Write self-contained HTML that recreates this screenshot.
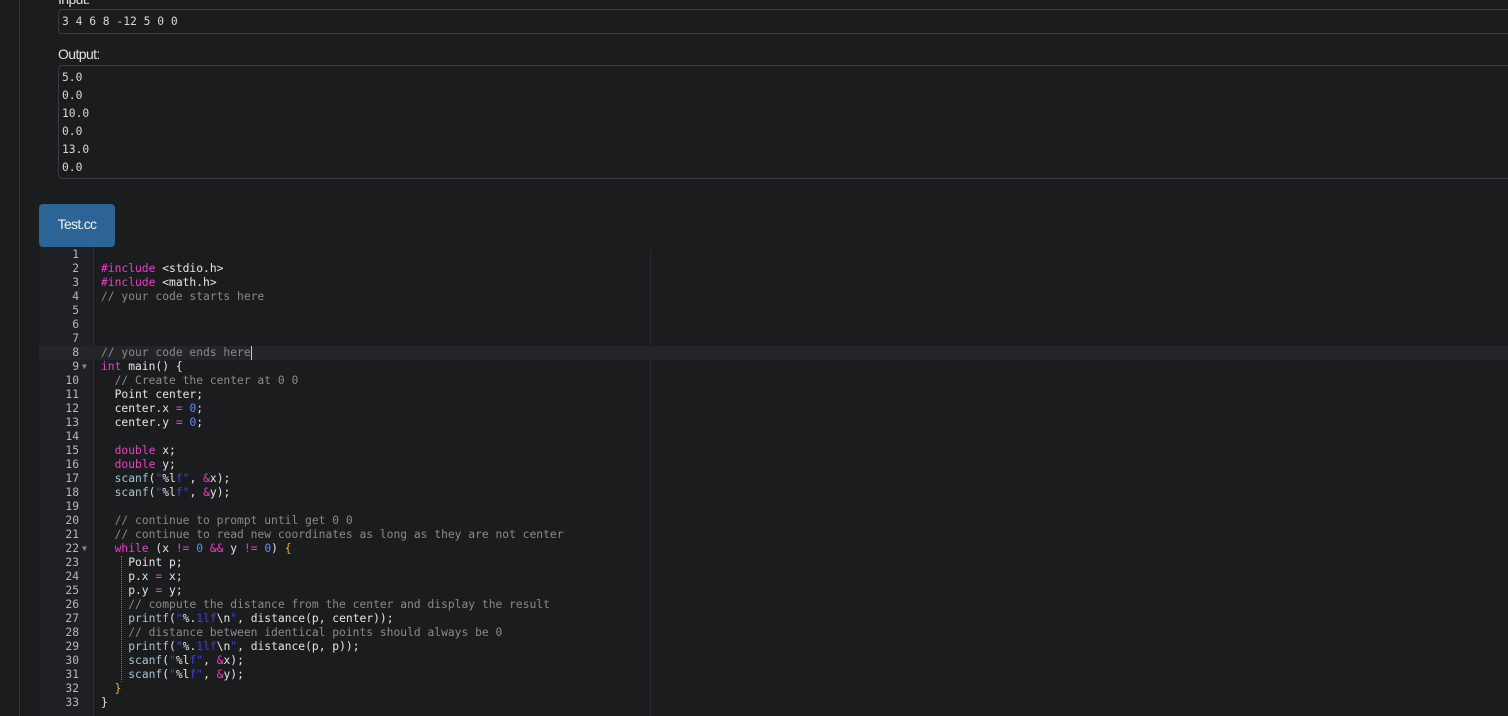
<!DOCTYPE html>
<html><head><meta charset="utf-8"><style>
*{margin:0;padding:0;box-sizing:border-box}
body{width:1508px;height:716px;overflow:hidden;background:#1b1c1e;font-family:"Liberation Sans",sans-serif;color:#e8e8e8;position:relative}
.vl{position:absolute;left:19px;top:0;width:1px;height:716px;background:#333538}
.lbl{position:absolute;left:58px;font-size:14px;color:#e0e0e0;letter-spacing:-0.6px}
.box{position:absolute;left:58px;right:0;border:1px solid #3a3b3e;border-right:none;border-radius:4px 0 0 4px;font-family:"DejaVu Sans Mono",monospace;font-size:11.3px;color:#d8d8d8;padding:3px 0 0 3px;line-height:18px}
.btn{position:absolute;left:39px;top:204px;width:76px;height:43px;background:#2c6496;border-radius:4px;color:#f0f0f0;font-size:14px;letter-spacing:-0.7px;display:flex;align-items:center;justify-content:center;padding-bottom:3px}
.gut{position:absolute;left:39px;top:247px;width:55px;height:469px;background:#1f2023;border-right:1px solid #303236}
.ed{position:absolute;left:39px;top:248px;right:0;font-family:"DejaVu Sans Mono",monospace;font-size:11.3px;line-height:14px}
.ln{height:14px;position:relative;white-space:pre}
.ln .n{position:absolute;left:0;width:40px;text-align:right;color:#b8b8b8}
.ln .c{position:absolute;left:62px;color:#e6e6e6}
.ln .f{position:absolute;left:43px;color:#888;font-size:8px}
.act{background:#242528}
.pm{position:absolute;left:650px;top:250px;width:1px;height:466px;background:#2a2b2e}
.k{color:#f03cc8}.ln .cm,.cm{color:#8a8a8a}.nu{color:#5b8cff}.s{color:#3e3ef0}.fn{color:#a8c4d0}.b{color:#e8b320}
.guide{position:absolute;left:121px;top:556px;height:126px;border-left:1px dotted #777}
</style></head><body>
<div class="vl"></div>
<div class="lbl" style="top:-9px">Input:</div>
<div class="box" style="top:9px;height:25px">3 4 6 8 -12 5 0 0</div>
<div class="lbl" style="top:46px">Output:</div>
<div class="box" style="top:65px;height:114px">5.0<br>0.0<br>10.0<br>0.0<br>13.0<br>0.0</div>
<div class="btn">Test.cc</div>
<div class="gut"></div>
<div class="pm"></div>
<div class="guide"></div>
<div class="ed">
<div class="ln"><span class="n">1</span></div>
<div class="ln"><span class="n">2</span><span class="c"><span class="k">#include</span> &lt;stdio.h&gt;</span></div>
<div class="ln"><span class="n">3</span><span class="c"><span class="k">#include</span> &lt;math.h&gt;</span></div>
<div class="ln"><span class="n">4</span><span class="c cm">// your code starts here</span></div>
<div class="ln"><span class="n">5</span></div>
<div class="ln"><span class="n">6</span></div>
<div class="ln"><span class="n">7</span></div>
<div class="ln act"><span class="n">8</span><span class="c cm" style="border-right:1px solid #ccc">// your code ends here</span></div>
<div class="ln"><span class="n">9</span><span class="f">▼</span><span class="c"><span class="k">int</span> main() {</span></div>
<div class="ln"><span class="n">10</span><span class="c">  <span class="cm">// Create the center at 0 0</span></span></div>
<div class="ln"><span class="n">11</span><span class="c">  Point center;</span></div>
<div class="ln"><span class="n">12</span><span class="c">  center.x <span class="k">=</span> <span class="nu">0</span>;</span></div>
<div class="ln"><span class="n">13</span><span class="c">  center.y <span class="k">=</span> <span class="nu">0</span>;</span></div>
<div class="ln"><span class="n">14</span></div>
<div class="ln"><span class="n">15</span><span class="c">  <span class="k">double</span> x;</span></div>
<div class="ln"><span class="n">16</span><span class="c">  <span class="k">double</span> y;</span></div>
<div class="ln"><span class="n">17</span><span class="c">  <span class="fn">scanf</span>(<span class="s">"</span>%l<span class="s">f"</span>, <span class="k">&amp;</span>x);</span></div>
<div class="ln"><span class="n">18</span><span class="c">  <span class="fn">scanf</span>(<span class="s">"</span>%l<span class="s">f"</span>, <span class="k">&amp;</span>y);</span></div>
<div class="ln"><span class="n">19</span></div>
<div class="ln"><span class="n">20</span><span class="c">  <span class="cm">// continue to prompt until get 0 0</span></span></div>
<div class="ln"><span class="n">21</span><span class="c">  <span class="cm">// continue to read new coordinates as long as they are not center</span></span></div>
<div class="ln"><span class="n">22</span><span class="f">▼</span><span class="c">  <span class="k">while</span> (x <span class="k">!=</span> <span class="nu">0</span> <span class="k">&amp;&amp;</span> y <span class="k">!=</span> <span class="nu">0</span>) <span class="b">{</span></span></div>
<div class="ln"><span class="n">23</span><span class="c">    Point p;</span></div>
<div class="ln"><span class="n">24</span><span class="c">    p.x <span class="k">=</span> x;</span></div>
<div class="ln"><span class="n">25</span><span class="c">    p.y <span class="k">=</span> y;</span></div>
<div class="ln"><span class="n">26</span><span class="c">    <span class="cm">// compute the distance from the center and display the result</span></span></div>
<div class="ln"><span class="n">27</span><span class="c">    <span class="fn">printf</span>(<span class="s">"</span>%.<span class="s">1lf</span>\n<span class="s">"</span>, distance(p, center));</span></div>
<div class="ln"><span class="n">28</span><span class="c">    <span class="cm">// distance between identical points should always be 0</span></span></div>
<div class="ln"><span class="n">29</span><span class="c">    <span class="fn">printf</span>(<span class="s">"</span>%.<span class="s">1lf</span>\n<span class="s">"</span>, distance(p, p));</span></div>
<div class="ln"><span class="n">30</span><span class="c">    <span class="fn">scanf</span>(<span class="s">"</span>%l<span class="s">f"</span>, <span class="k">&amp;</span>x);</span></div>
<div class="ln"><span class="n">31</span><span class="c">    <span class="fn">scanf</span>(<span class="s">"</span>%l<span class="s">f"</span>, <span class="k">&amp;</span>y);</span></div>
<div class="ln"><span class="n">32</span><span class="c">  <span class="b">}</span></span></div>
<div class="ln"><span class="n">33</span><span class="c">}</span></div>
</div>
</body></html>
